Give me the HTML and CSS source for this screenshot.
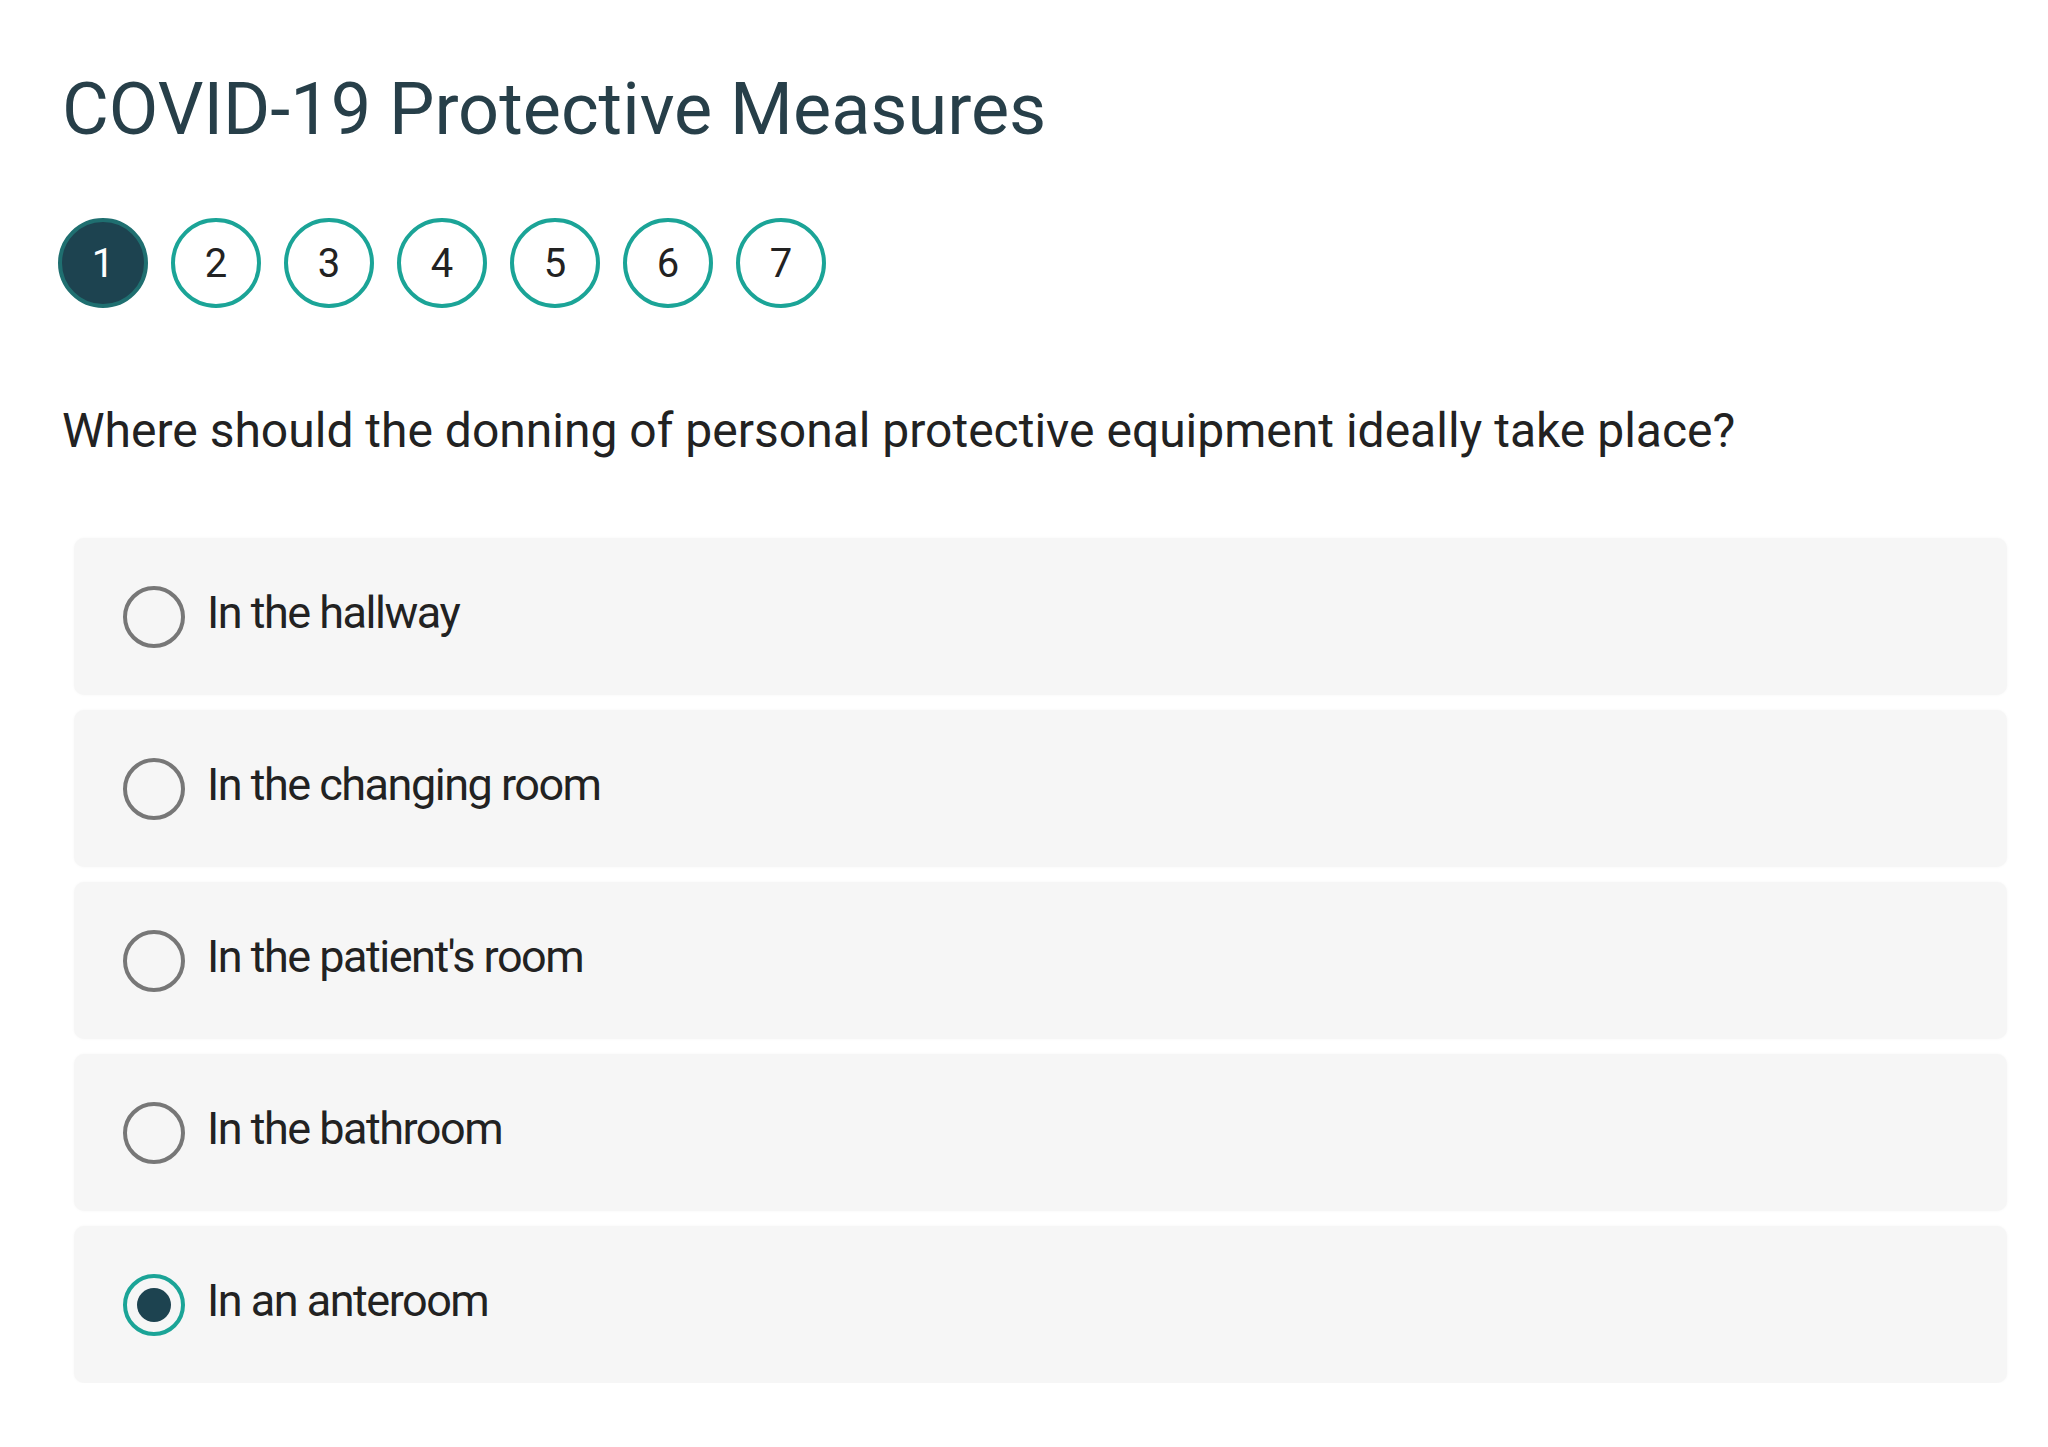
FILE: index.html
```html
<!DOCTYPE html>
<html lang="en">
<head>
<meta charset="utf-8">
<title>COVID-19 Protective Measures</title>
<link rel="stylesheet" href="styles.css">
</head>
<body>
<main class="quiz">
  <h1 class="title">COVID-19 Protective Measures</h1>
  <ol class="steps">
    <li class="step active">1</li>
    <li class="step">2</li>
    <li class="step">3</li>
    <li class="step">4</li>
    <li class="step">5</li>
    <li class="step">6</li>
    <li class="step">7</li>
  </ol>
  <p class="question">Where should the donning of personal protective equipment ideally take place?</p>
  <div class="options">
    <label class="option"><span class="radio"></span><span class="label">In the hallway</span></label>
    <label class="option"><span class="radio"></span><span class="label">In the changing room</span></label>
    <label class="option"><span class="radio"></span><span class="label">In the patient's room</span></label>
    <label class="option"><span class="radio"></span><span class="label">In the bathroom</span></label>
    <label class="option"><span class="radio checked"></span><span class="label">In an anteroom</span></label>
  </div>
</main>
</body>
</html>
```
FILE: styles.css
```css
html, body {
  margin: 0;
  padding: 0;
  background: #ffffff;
}
body {
  font-family: Roboto, "Liberation Sans", Arial, sans-serif;
  color: #222222;
}
.quiz {
  padding: 67px 41px 0 62px;
}
.title {
  margin: 0;
  font-size: 72px;
  line-height: 86px;
  font-weight: 400;
  color: #273f49;
}
.steps {
  list-style: none;
  margin: 65px 0 0 -4px;
  padding: 0;
  display: flex;
  gap: 23px;
}
.step {
  box-sizing: border-box;
  width: 90px;
  height: 90px;
  border: 4px solid #1ba497;
  border-radius: 50%;
  display: flex;
  align-items: center;
  justify-content: center;
  font-size: 40px;
  color: #222222;
}
.step.active {
  background: #1d4350;
  border-color: #1f6f70;
  color: #ffffff;
}
.question {
  margin: 95px 0 0 0;
  font-size: 48px;
  line-height: 56px;
  color: #222222;
}
.options {
  margin: 79px 0 0 12px;
  display: flex;
  flex-direction: column;
  gap: 15px;
}
.option {
  box-sizing: border-box;
  height: 157px;
  background: #f6f6f6;
  border-radius: 10px;
  box-shadow: 0 0 3px rgba(0, 0, 0, 0.04);
  display: flex;
  align-items: center;
  padding-left: 49px;
}
.radio {
  box-sizing: border-box;
  width: 62px;
  height: 62px;
  border: 4px solid #777777;
  border-radius: 50%;
  flex: none;
  display: flex;
  align-items: center;
  justify-content: center;
}
.radio.checked {
  border-color: #1ba497;
}
.radio.checked::after {
  content: "";
  width: 34px;
  height: 34px;
  border-radius: 50%;
  background: #1d4350;
}
.label {
  margin-left: 22px;
  padding-bottom: 7px;
  font-size: 45px;
  line-height: 50px;
  letter-spacing: -1.5px;
  color: #222222;
}
```
